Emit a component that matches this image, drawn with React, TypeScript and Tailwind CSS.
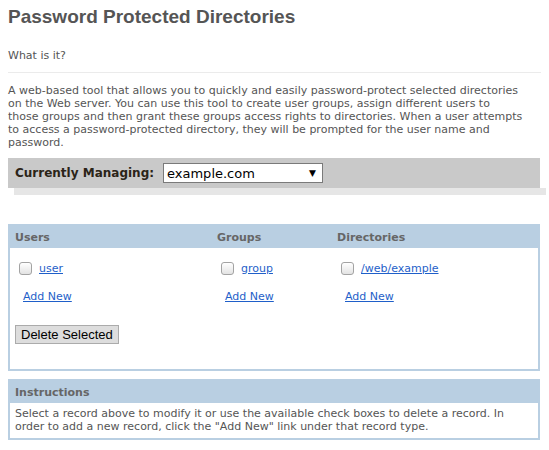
import React from 'react';

const Check: React.FC = () => (
  <span className="inline-block w-[13px] h-[13px] rounded-[3px] border border-[#a3a3a3] bg-gradient-to-b from-white to-[#e3e3e3] shrink-0" />
);

const Item: React.FC<{ label: string }> = ({ label }) => (
  <div className="flex flex-col">
    <div className="flex items-center gap-[7px] pl-1 h-[16px]">
      <Check />
      <a href="#" className="text-[#1f5fc9] underline">{label}</a>
    </div>
    <a href="#" className="text-[#1f5fc9] underline pl-2 mt-[14px]">Add New</a>
  </div>
);

const App: React.FC = () => {
  return (
    <div className="px-2 text-[11px] leading-[13px] text-[#555] bg-white min-h-[450px] overflow-hidden" style={{ fontFamily: '"DejaVu Sans", Verdana, sans-serif' }}>
      <h1 className="pt-[5px] text-[19px] leading-[24px] font-bold text-[#555]" style={{ fontFamily: '"Liberation Sans", Arial, sans-serif' }}>
        Password Protected Directories
      </h1>
      <p className="mt-[20px]">What is it?</p>
      <div className="mt-[10px] h-px bg-[#ebebeb] w-[533px]" />
      <p className="mt-[11px] whitespace-nowrap">
        A web-based tool that allows you to quickly and easily password-protect selected directories<br />
        on the Web server. You can use this tool to create user groups, assign different users to<br />
        those groups and then grant these groups access rights to directories. When a user attempts<br />
        to access a password-protected directory, they will be prompted for the user name and<br />
        password.
      </p>

      <div className="mt-[9px] w-[532px] h-[30px] bg-[#c9c9c9] flex items-center px-[7px] gap-[9px]">
        <span className="text-[12px] font-bold text-[#2b2418]">Currently Managing:</span>
        <div className="w-[160px] h-[20px] bg-white border border-[#7a7a7a] flex items-center justify-between pl-[3px] pr-[6px] text-[13px] text-black">
          <span>example.com</span>
          <span className="text-[9px]">▼</span>
        </div>
      </div>
      <div className="ml-[6px] w-[532px] h-[7px] bg-[#e6e6e6]" />

      <div className="mt-[29px] w-[532px] border-2 border-[#b9cfe2]">
        <div className="bg-[#b9cfe2] h-[22px] flex items-center px-[5px] font-bold text-[#666]">
          <span className="w-[202px]">Users</span>
          <span className="w-[120px]">Groups</span>
          <span>Directories</span>
        </div>
        <div className="bg-white px-[5px] pt-[12px] pb-[25px]">
          <div className="flex">
            <div className="w-[202px]"><Item label="user" /></div>
            <div className="w-[120px]"><Item label="group" /></div>
            <div><Item label="/web/example" /></div>
          </div>
          <button className="mt-[22px] h-[19px] px-[5px] bg-[#dddddd] border border-[#ababab] text-[13px] leading-[17px] text-black" style={{ fontFamily: '"Liberation Sans", Arial, sans-serif' }}>
            Delete Selected
          </button>
        </div>
      </div>

      <div className="mt-[8px] w-[532px] border-2 border-[#b9cfe2]">
        <div className="bg-[#b9cfe2] h-[22px] flex items-center px-[5px] font-bold text-[#666]">
          Instructions
        </div>
        <div className="bg-white px-[5px] pt-[4px] pb-[5px] whitespace-nowrap">
          Select a record above to modify it or use the available check boxes to delete a record. In<br />
          order to add a new record, click the "Add New" link under that record type.
        </div>
      </div>
    </div>
  );
};

export default App;
